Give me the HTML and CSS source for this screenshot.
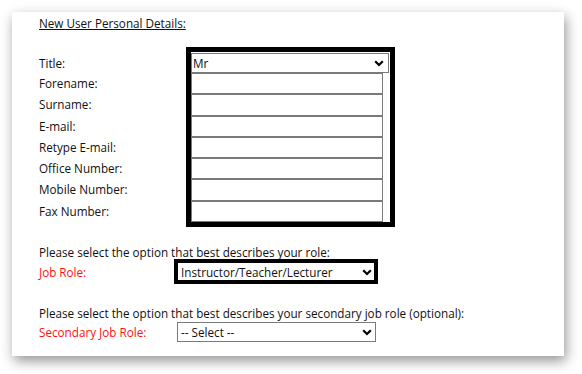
FILE: index.html
```
<!DOCTYPE html>
<html>
<head>
<meta charset="utf-8">
<link rel="stylesheet" href="styles.css">
</head>
<body>
<div class="page">
<div class="card">
  <div class="heading">New User Personal Details:</div>
  <div class="personal">
    <div class="labels">
      <div class="label first">Title:</div>
      <div class="label">Forename:</div>
      <div class="label">Surname:</div>
      <div class="label">E-mail:</div>
      <div class="label">Retype E-mail:</div>
      <div class="label">Office Number:</div>
      <div class="label">Mobile Number:</div>
      <div class="label">Fax Number:</div>
    </div>
    <div class="box">
      <div class="sel-wrap title-wrap">
        <select class="sel title-sel"><option>Mr</option></select>
        <svg class="chev" width="10" height="7" viewBox="0 0 10 7"><path d="M1.2 1.2 L5 5 L8.8 1.2" fill="none" stroke="#000" stroke-width="2.2"/></svg>
      </div>
      <input class="field" type="text">
      <input class="field" type="text">
      <input class="field" type="text">
      <input class="field" type="text">
      <input class="field" type="text">
      <input class="field" type="text">
      <input class="field" type="text">
    </div>
  </div>
  <div class="prompt first-prompt">Please select the option that best describes your role:</div>
  <div class="role-row job-row">
    <span class="role-label job-label">Job Role:</span>
    <span class="sel-wrap">
      <select class="sel job-sel"><option>Instructor/Teacher/Lecturer</option></select>
      <svg class="chev chev-job" width="10" height="7" viewBox="0 0 10 7"><path d="M1.2 1.2 L5 5 L8.8 1.2" fill="none" stroke="#000" stroke-width="2.2"/></svg>
    </span>
  </div>
  <div class="prompt second-prompt">Please select the option that best describes your secondary job role (optional):</div>
  <div class="role-row sec-row">
    <span class="role-label sec-label">Secondary Job Role:</span>
    <span class="sel-wrap">
      <select class="sel sec-sel"><option>-- Select --</option></select>
      <svg class="chev chev-sec" width="10" height="7" viewBox="0 0 10 7"><path d="M1.2 1.2 L5 5 L8.8 1.2" fill="none" stroke="#000" stroke-width="2.2"/></svg>
    </span>
  </div>
</div>
</div>
</body>
</html>
```
FILE: styles.css
```
html, body {
  margin: 0;
  padding: 0;
  background: #fff;
}
body {
  font-family: "Open Sans", "Liberation Sans", sans-serif;
  font-size: 11.7px;
  color: #111;
}
.page {
  padding: 12px 0 0 12px;
  height: 374px;
  box-sizing: border-box;
}
.card {
  width: 552px;
  height: 344px;
  box-sizing: border-box;
  padding: 3px 0 0 27px;
  background: #fff;
  box-shadow: 2px 5px 12px rgba(0, 0, 0, 0.42);
}
.heading {
  line-height: 17px;
  text-decoration: underline;
}
.personal {
  display: flex;
  margin-top: 15px;
}
.labels {
  width: 147px;
  padding-top: 6px;
}
.label {
  height: 21.3px;
  line-height: 21.3px;
}
.label.first {
  height: 20px;
  line-height: 20px;
}
.box {
  border: 5px solid #000;
  padding: 1px 1px 0 0;
  display: flex;
  flex-direction: column;
  align-items: flex-start;
}
.sel-wrap {
  position: relative;
  display: inline-block;
}
.sel {
  appearance: none;
  -webkit-appearance: none;
  font-family: "Open Sans", "Liberation Sans", sans-serif;
  font-size: 11.7px;
  color: #111;
  background: #fff;
  border-radius: 0;
  margin: 0;
  display: block;
  box-sizing: border-box;
  outline: none;
}
.title-sel {
  width: 198px;
  height: 20px;
  border: 1px solid #7a7a7a;
  padding: 0 0 0 1px;
  line-height: 18px;
}
.chev {
  position: absolute;
  top: 50%;
  margin-top: -3px;
  right: 5px;
}
.chev-job {
  right: 6px;
}
.chev-sec {
  right: 4px;
}
.field {
  display: block;
  box-sizing: border-box;
  width: 192px;
  height: 21.3px;
  margin: 0;
  padding: 0;
  border: 1px solid #7a7a7a;
  border-radius: 0;
  background: #fff;
  font-family: "Open Sans", "Liberation Sans", sans-serif;
  font-size: 11.7px;
  outline: none;
}
.prompt {
  line-height: 16px;
}
.first-prompt {
  margin-top: 17px;
}
.second-prompt {
  margin-top: 21px;
}
.role-row {
  display: flex;
  align-items: center;
}
.job-row {
  margin-top: -1px;
}
.sec-row {
  margin-top: 1px;
}
.role-label {
  color: #ff1010;
}
.job-label {
  width: 135px;
}
.sec-label {
  width: 138px;
}
.job-sel {
  width: 204px;
  height: 25px;
  border: 4px solid #000;
  padding: 0 0 0 3px;
}
.sec-sel {
  width: 199px;
  height: 20px;
  border: 1px solid #7a7a7a;
  padding: 0 0 0 3px;
}
```
